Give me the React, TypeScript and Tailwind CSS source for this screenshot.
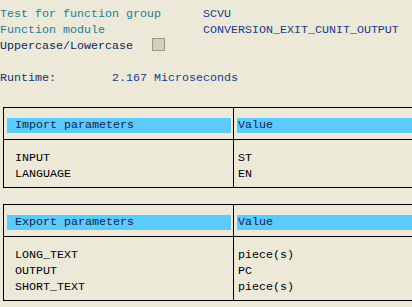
import React from 'react';

const mono = { fontFamily: '"Liberation Mono", "Courier New", monospace' };

type Row = [string, string];

const ParamTable: React.FC<{ title: string; rows: Row[]; className?: string }> = ({ title, rows, className }) => {
  return (
    <div className={`ml-[3px] w-[440px] border border-black ${className ?? ''}`}>
      {/* header band */}
      <div className="flex border-b border-black">
        <div className="w-[229px] shrink-0 pt-[10px] pb-[6px] pl-[3px] pr-[2px]">
          <div className="h-[15px] bg-[#5ccbfb] pl-[8px] leading-[15px] text-[#0d2456]">{title}</div>
        </div>
        <div className="flex-1 border-l border-black pt-[10px] pb-[6px] pl-[3px]">
          <div className="h-[15px] bg-[#5ccbfb] pl-[1px] leading-[15px] text-[#0d2456]">Value</div>
        </div>
      </div>
      {/* values */}
      <div className="flex">
        <div className="w-[229px] shrink-0 pt-[10px] pb-[5px] pl-[11px]">
          {rows.map(([name]) => (
            <div key={name} className="h-[16px] leading-[16px] text-black">{name}</div>
          ))}
        </div>
        <div className="flex-1 border-l border-black pt-[10px] pb-[5px] pl-[4px]">
          {rows.map(([name, value]) => (
            <div key={name} className="h-[16px] leading-[16px] text-black">{value}</div>
          ))}
        </div>
      </div>
    </div>
  );
};

const App: React.FC = () => {
  return (
    <div className="w-[412px] h-[307px] overflow-hidden bg-[#ece9d8] text-[11.67px] whitespace-pre" style={mono}>
      <div className="pt-[6px]">
        <div className="flex h-[16px] leading-[16px]">
          <span className="w-[203px] text-[#1f7b9c]">Test for function group</span>
          <span className="text-[#1b3a8a]">SCVU</span>
        </div>
        <div className="flex h-[16px] leading-[16px]">
          <span className="w-[203px] text-[#1f7b9c]">Function module</span>
          <span className="text-[#1b3a8a]">CONVERSION_EXIT_CUNIT_OUTPUT</span>
        </div>
        <div className="flex h-[16px] items-start leading-[16px]">
          <span className="w-[152px] text-[#0e1f5c]">Uppercase/Lowercase</span>
          <span className="h-[13px] w-[13px] border border-[#9a9888] bg-[#d4d0c0]" />
        </div>
        <div className="h-[16px]" />
        <div className="flex h-[16px] leading-[16px]">
          <span className="w-[112px] text-[#14306e]">Runtime:</span>
          <span className="text-[#1b3a8a]">2.167 Microseconds</span>
        </div>
      </div>

      <ParamTable
        className="mt-[21px]"
        title="Import parameters"
        rows={[
          ['INPUT', 'ST'],
          ['LANGUAGE', 'EN'],
        ]}
      />

      <ParamTable
        className="mt-[16px]"
        title="Export parameters"
        rows={[
          ['LONG_TEXT', 'piece(s)'],
          ['OUTPUT', 'PC'],
          ['SHORT_TEXT', 'piece(s)'],
        ]}
      />
    </div>
  );
};

export default App;
